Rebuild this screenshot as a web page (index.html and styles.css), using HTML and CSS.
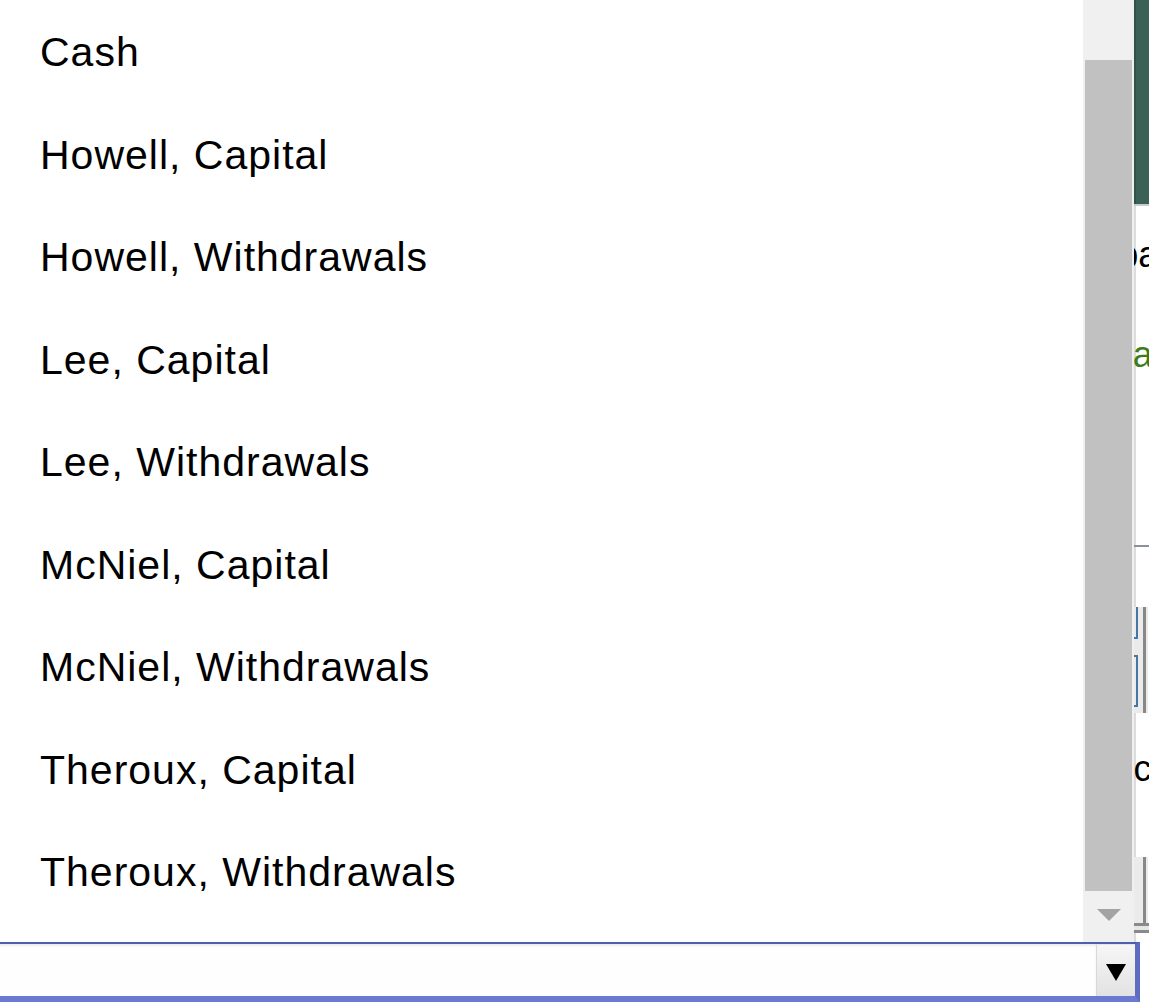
FILE: index.html
```html
<!DOCTYPE html>
<html>
<head>
<meta charset="utf-8">
<link rel="stylesheet" href="styles.css">
</head>
<body>
<div class="screen">
  <div class="main">
    <div class="listbox">
      <ul class="options">
        <li>Cash</li>
        <li>Howell, Capital</li>
        <li>Howell, Withdrawals</li>
        <li>Lee, Capital</li>
        <li>Lee, Withdrawals</li>
        <li>McNiel, Capital</li>
        <li>McNiel, Withdrawals</li>
        <li>Theroux, Capital</li>
        <li>Theroux, Withdrawals</li>
      </ul>
      <div class="scrollbar">
        <div class="sb-space"></div>
        <div class="sb-thumb"></div>
        <div class="sb-down"><span class="sb-arrow"></span></div>
      </div>
    </div>
    <div class="select">
      <div class="select-value"></div>
      <div class="select-btn"><span class="select-arrow"></span></div>
    </div>
  </div>
  <div class="edge">
    <div class="edge-green"></div>
    <div class="edge-green-rule"></div>
    <div class="edge-body">
      <div class="frag frag-pa">pa</div>
      <div class="frag frag-a">a</div>
      <div class="edge-rule"></div>
      <div class="edge-box box1">
        <div class="brackets">
          <div class="br br1"></div>
          <div class="br-gap"></div>
          <div class="br br2"></div>
        </div>
        <div class="edge-bar"></div>
      </div>
      <div class="frag frag-c">c</div>
      <div class="edge-box box2">
        <div class="brackets"></div>
        <div class="edge-bar"></div>
      </div>
      <div class="edge-hline"></div>
      <div class="edge-hgap"></div>
      <div class="edge-hline"></div>
    </div>
  </div>
</div>
</body>
</html>
```

FILE: styles.css
```css
html, body {
  margin: 0;
  padding: 0;
  background: #ffffff;
}
body {
  width: 1149px;
  height: 1002px;
  overflow: hidden;
  font-family: "Liberation Sans", Arial, sans-serif;
}
.screen {
  display: flex;
  width: 1149px;
  height: 1002px;
}
.main {
  width: 1134px;
  flex: none;
  display: flex;
  flex-direction: column;
}
.listbox {
  height: 942px;
  display: flex;
  background: #ffffff;
}
.options {
  flex: 1;
  list-style: none;
  margin: 0;
  padding: 1px 0 0 40px;
}
.options li {
  height: 102.5px;
  line-height: 102.5px;
  font-size: 41px;
  letter-spacing: 1px;
  color: #000000;
  white-space: nowrap;
}
.scrollbar {
  width: 51px;
  flex: none;
  background: #f0f0f0;
  display: flex;
  flex-direction: column;
  padding: 0 2px;
  box-sizing: border-box;
}
.sb-space {
  height: 60px;
}
.sb-thumb {
  height: 831px;
  background: #c1c1c1;
}
.sb-down {
  height: 50px;
  display: flex;
  justify-content: center;
  padding-top: 18px;
  box-sizing: border-box;
}
.sb-arrow {
  width: 0;
  height: 0;
  border-left: 12.5px solid transparent;
  border-right: 12.5px solid transparent;
  border-top: 12px solid #a3a3a3;
}
.select {
  position: relative;
  z-index: 2;
  height: 60px;
  margin-left: -6px;
  margin-right: -6px;
  display: flex;
  border-top: 2px solid #4e5fae;
  border-right: 5px solid #5d6dc2;
  border-bottom: 6px solid #6a7ad2;
  border-left: 5px solid #5d6dc2;
  box-sizing: border-box;
  background: #ffffff;
}
.select-value {
  flex: 1;
  background: #fefefe;
  box-shadow: inset 0 2px 2px #ececec;
}
.select-btn {
  width: 39px;
  flex: none;
  border-left: 1px solid #d8d8d8;
  border-top: 1px solid #e6e6e6;
  background: linear-gradient(#f6f6f6, #e2e2e2);
  display: flex;
  justify-content: center;
  padding-top: 19px;
  box-sizing: border-box;
}
.select-arrow {
  width: 0;
  height: 0;
  border-left: 10px solid transparent;
  border-right: 10px solid transparent;
  border-top: 17px solid #000000;
}
.edge {
  width: 15px;
  flex: none;
  overflow: hidden;
  display: flex;
  flex-direction: column;
}
.edge-green {
  height: 204px;
  background: #3b6156;
  border-left: 2px solid #2f5249;
  box-sizing: border-box;
}
.edge-green-rule {
  height: 2px;
  background: #c5cad3;
}
.edge-body {
  flex: 1;
  border-left: 2px solid #dcdcdc;
  display: flex;
  flex-direction: column;
}
.frag {
  height: 40px;
  line-height: 40px;
  font-size: 36px;
  white-space: nowrap;
  flex: none;
}
.frag-pa {
  margin-top: 28.5px;
  text-indent: -17.8px;
  color: #000000;
}
.frag-a {
  margin-top: 60px;
  text-indent: -3.3px;
  color: #3c7d1a;
}
.edge-rule {
  margin-top: 170.5px;
  height: 2px;
  margin-left: -2px;
  background: #8d9199;
  flex: none;
}
.edge-box {
  margin-left: -2px;
  width: 14px;
  display: flex;
  background: #ebebeb;
  flex: none;
}
.box1 {
  margin-top: 59.5px;
  height: 106px;
}
.box2 {
  margin-top: 67.5px;
  height: 66px;
}
.frag-c {
  margin-top: 36.5px;
  text-indent: -2.4px;
  color: #000000;
}
.brackets {
  width: 4px;
  display: flex;
  flex-direction: column;
  flex: none;
}
.br {
  box-sizing: border-box;
  border-right: 2px solid #4776a6;
  border-bottom: 2px solid #4776a6;
}
.br1 {
  height: 32px;
}
.br-gap {
  height: 16px;
}
.br2 {
  height: 52px;
  border-top: 2px solid #4776a6;
}
.edge-bar {
  margin-left: 5px;
  width: 3px;
  background: #888888;
}
.edge-hline {
  margin-left: -2px;
  height: 3px;
  background: #8a8a8a;
  flex: none;
}
.edge-hgap {
  margin-left: -2px;
  height: 4px;
  background: #e6e6e6;
  flex: none;
}
```
